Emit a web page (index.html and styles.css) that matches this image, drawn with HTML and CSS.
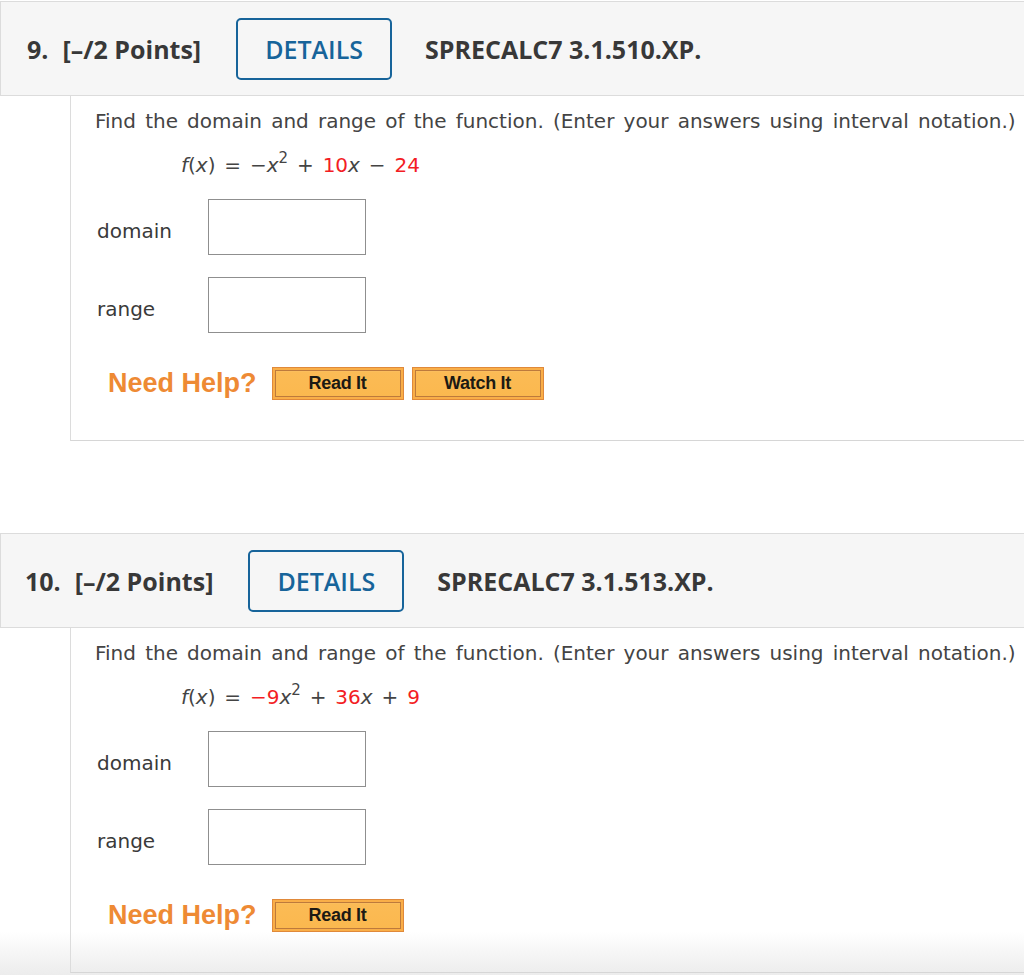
FILE: index.html
```html
<!DOCTYPE html>
<html lang="en">
<head>
<meta charset="utf-8">
<title>Questions</title>
<link rel="stylesheet" href="styles.css">
</head>
<body>
<div class="page">
  <section class="question">
    <header class="q-header">
      <span class="q-num">9.</span>
      <span class="q-points">[–/2 Points]</span>
      <button class="details-btn">DETAILS</button>
      <span class="q-code">SPRECALC7 3.1.510.XP.</span>
    </header>
    <div class="q-body">
      <p class="prompt">Find the domain and range of the function. (Enter your answers using interval notation.)</p>
      <p class="formula"><i>f</i>(<i>x</i>) = −<i>x</i><sup>2</sup> + <span class="rand">10</span><i>x</i> − <span class="rand">24</span></p>
      <div class="answers">
        <label class="ans-label">domain</label>
        <span class="ans-box"></span>
        <label class="ans-label">range</label>
        <span class="ans-box"></span>
      </div>
      <div class="help">
        <span class="help-text">Need Help?</span>
        <button class="help-btn">Read It</button>
        <button class="help-btn">Watch It</button>
      </div>
    </div>
  </section>

  <section class="question second">
    <header class="q-header">
      <span class="q-num">10.</span>
      <span class="q-points">[–/2 Points]</span>
      <button class="details-btn">DETAILS</button>
      <span class="q-code">SPRECALC7 3.1.513.XP.</span>
    </header>
    <div class="q-body">
      <p class="prompt">Find the domain and range of the function. (Enter your answers using interval notation.)</p>
      <p class="formula"><i>f</i>(<i>x</i>) = <span class="rand">−9</span><i>x</i><sup>2</sup> + <span class="rand">36</span><i>x</i> + <span class="rand">9</span></p>
      <div class="answers">
        <label class="ans-label">domain</label>
        <span class="ans-box"></span>
        <label class="ans-label">range</label>
        <span class="ans-box"></span>
      </div>
      <div class="help">
        <span class="help-text">Need Help?</span>
        <button class="help-btn">Read It</button>
      </div>
    </div>
  </section>
</div>
</body>
</html>
```

FILE: styles.css
```css
html {
  min-height: 975px;
  background: linear-gradient(to bottom, #ffffff 0, #ffffff 932px, #ececec 975px);
}

body {
  margin: 0;
  font-family: "DejaVu Sans", Verdana, sans-serif;
  color: #444;
}

.page {
  padding-top: 1px;
}

.question.second {
  margin-top: 92px;
}

.q-header {
  display: flex;
  align-items: center;
  height: 93px;
  background: #f6f6f6;
  border: 1px solid #dcdcdc;
  border-right: none;
  padding-left: 26px;
  font-family: "Open Sans", sans-serif;
  font-weight: 700;
  font-size: 25px;
  color: #383838;
}

.q-num {
  margin-right: 14px;
}

.second .q-num {
  margin-left: -2px;
}

.q-points {
  margin-right: 35px;
}

.details-btn {
  font-family: "Open Sans", sans-serif;
  font-weight: 600;
  font-size: 25px;
  color: #17649a;
  background: transparent;
  border: 2px solid #17649a;
  border-radius: 5px;
  height: 62px;
  padding: 0 27px;
  margin-right: 33px;
}

.q-body {
  margin-left: 70px;
  border-left: 1px solid #dcdcdc;
  border-bottom: 1px solid #d6d6d6;
  padding: 12px 0 40px 24px;
}

.prompt {
  margin: 0;
  font-size: 20px;
  line-height: 26px;
  word-spacing: 2.8px;
  color: #444;
}

.formula {
  margin: 18px 0 0 86px;
  font-size: 20px;
  line-height: 26px;
  color: #444;
  word-spacing: 2.5px;
}

.formula sup {
  font-size: 15px;
  line-height: 0;
  vertical-align: 9px;
}

.rand {
  color: #f31d24;
}

.answers {
  display: grid;
  grid-template-columns: 111px 158px;
  row-gap: 22px;
  align-items: center;
  margin-top: 21px;
  padding-left: 2px;
}

.ans-label {
  font-size: 20px;
  color: #3a3a3a;
  padding-top: 8px;
}

.ans-box {
  display: block;
  height: 54px;
  border: 1px solid #8f8f8f;
  background: #fff;
}

.help {
  display: flex;
  align-items: center;
  margin-top: 34px;
  padding-left: 13px;
}

.help-text {
  font-family: "Liberation Sans", Arial, sans-serif;
  font-weight: 700;
  font-size: 27px;
  color: #ee8a34;
  margin-right: 15px;
}

.help-btn {
  width: 132px;
  height: 33px;
  margin-right: 8px;
  padding: 0;
  border: 1px solid #e0893a;
  background: linear-gradient(to bottom, #fcd596 0, #fbbb55 4px, #fbb84e 100%);
  box-shadow: inset 0 0 0 2px #f9ae48, inset 0 0 0 3px #bd7a3c;
  font-family: "Liberation Sans", Arial, sans-serif;
  font-weight: 700;
  font-size: 18px;
  letter-spacing: -0.3px;
  color: #1c1a14;
}
```
